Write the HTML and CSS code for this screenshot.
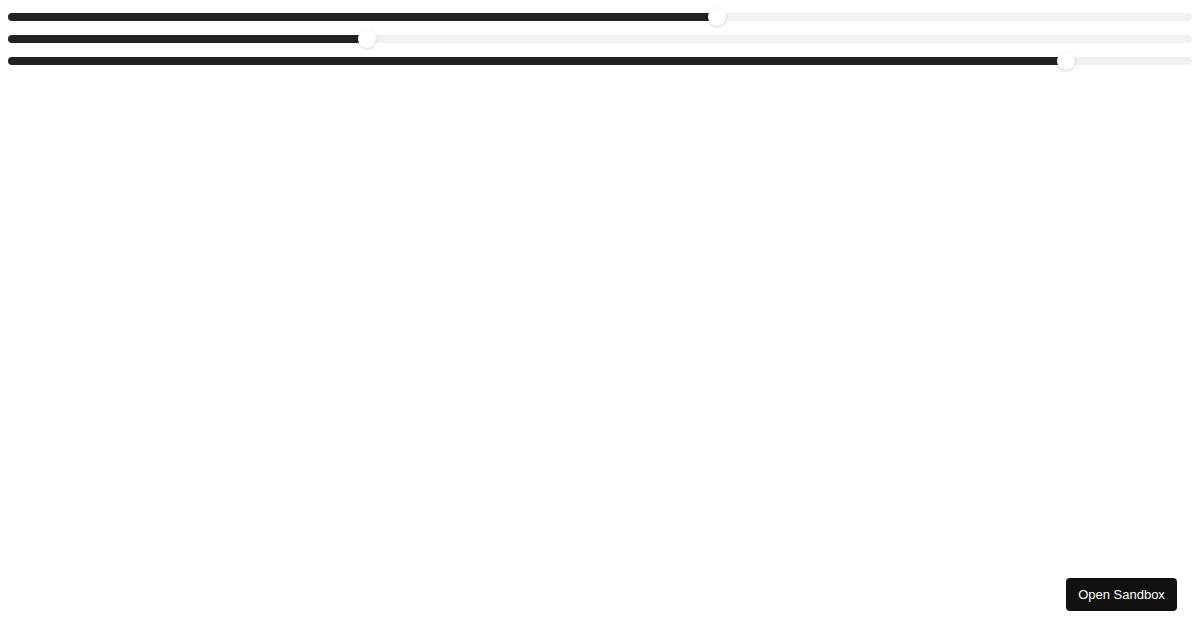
FILE: index.html
```html
<!DOCTYPE html>
<html>
<head>
<meta charset="utf-8">
<link rel="stylesheet" href="styles.css">
</head>
<body>
<div class="sliders">
  <div class="slider"><div class="track"><div class="fill" style="width: calc(9px + 0.6 * (100% - 18px))"></div><div class="thumb" style="left: calc(0.6 * (100% - 18px))"></div></div></div>
  <div class="slider"><div class="track"><div class="fill" style="width: calc(9px + 0.3 * (100% - 18px))"></div><div class="thumb" style="left: calc(0.3 * (100% - 18px))"></div></div></div>
  <div class="slider"><div class="track"><div class="fill" style="width: calc(9px + 0.9 * (100% - 18px))"></div><div class="thumb" style="left: calc(0.9 * (100% - 18px))"></div></div></div>
</div>
<button class="sandbox">Open Sandbox</button>
</body>
</html>
```
FILE: styles.css
```css
html, body { margin: 0; padding: 0; background: #fff; }
body { padding: 8px; font-family: "Liberation Sans", Arial, sans-serif; }
.sliders { display: flex; flex-direction: column; gap: 4px; }
.slider { height: 18px; display: flex; align-items: center; }
.track { position: relative; width: 100%; height: 8px; border-radius: 4px; background: #f1f1f1; }
.fill { position: absolute; left: 0; top: 0; bottom: 0; background: #222222; border-radius: 4px 0 0 4px; }
.thumb { position: absolute; top: -5px; width: 18px; height: 18px; border-radius: 50%; background: #fff; box-shadow: 0 1px 3px rgba(0,0,0,0.18); }
.sandbox { position: fixed; right: 23px; bottom: 19px; width: 111px; height: 33px; background: #111; color: #fff; border: none; border-radius: 4px; font-family: "Liberation Sans", Arial, sans-serif; font-size: 13px; padding: 0; }
```
